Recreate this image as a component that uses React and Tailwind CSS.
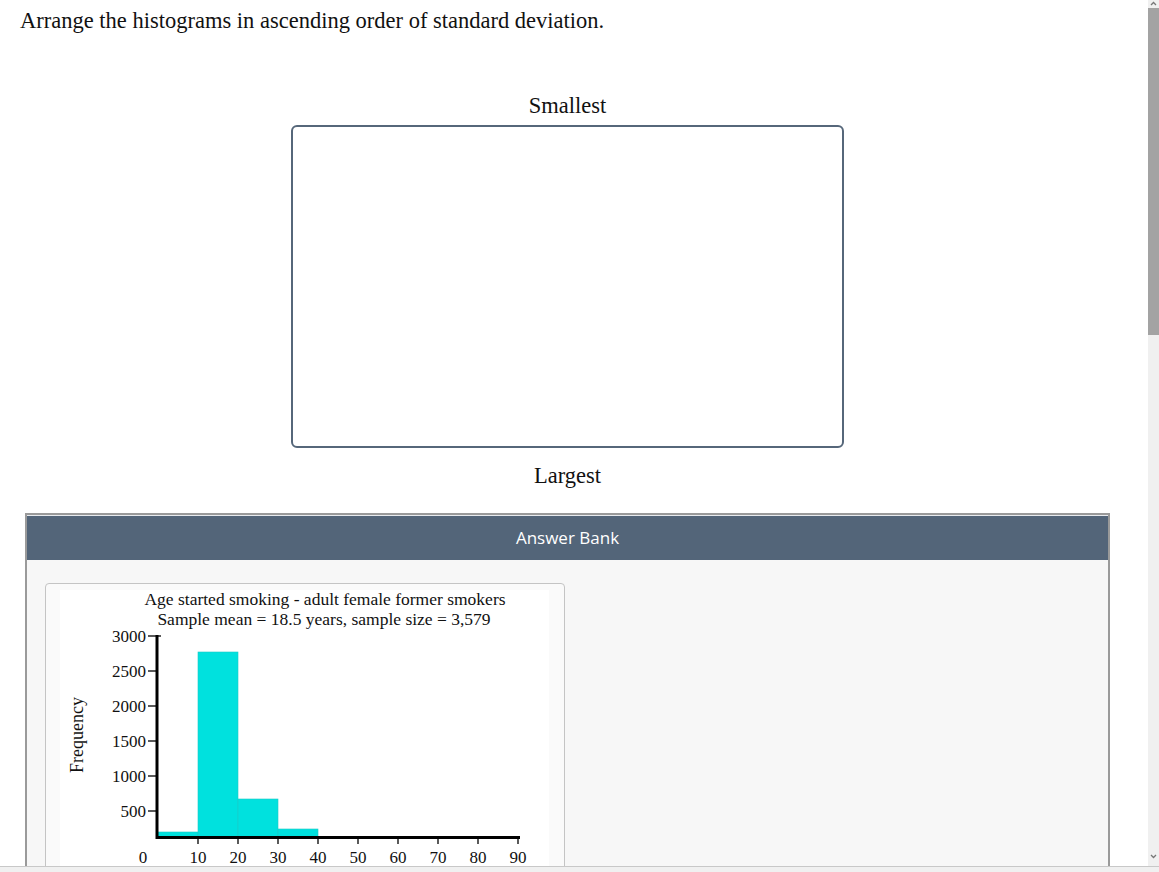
import React from 'react';

const serif = { fontFamily: '"Liberation Serif", "Times New Roman", serif' };

const bars = [
  { x0: 0, x1: 10, top: 242 },
  { x0: 10, x1: 20, top: 62 },
  { x0: 20, x1: 30, top: 209 },
  { x0: 30, x1: 40, top: 239 },
];

const yTicks = [
  { label: '3000', y: 46 },
  { label: '2500', y: 81 },
  { label: '2000', y: 116 },
  { label: '1500', y: 151 },
  { label: '1000', y: 186 },
  { label: '500', y: 221 },
];

const xPos = (v) => 98 + v * 4;

const Histogram = () => (
  <svg width="489" height="290" viewBox="0 0 489 290" className="block" style={serif}>
    <text x="265" y="15" textAnchor="middle" fontSize="17.5" fill="#111">
      Age started smoking - adult female former smokers
    </text>
    <text x="264" y="35" textAnchor="middle" fontSize="17.5" fill="#111">
      Sample mean = 18.5 years, sample size = 3,579
    </text>

    {bars.map((b) => (
      <rect
        key={b.x0}
        x={xPos(b.x0)}
        y={b.top}
        width={xPos(b.x1) - xPos(b.x0)}
        height={247 - b.top}
        fill="#00e1de"
        stroke="#1cc9c6"
        strokeWidth="0.6"
      />
    ))}

    {yTicks.map((t) => (
      <g key={t.label}>
        <line x1="88" x2="97" y1={t.y} y2={t.y} stroke="#000" strokeWidth="1.3" />
        <text x="86" y={t.y + 5.5} textAnchor="end" fontSize="17" fill="#111">
          {t.label}
        </text>
      </g>
    ))}
    <line x1="97" x2="101" y1="46" y2="46" stroke="#000" strokeWidth="1.3" />

    <line x1="97" x2="97" y1="45" y2="249" stroke="#000" strokeWidth="3" />
    <line x1="96" x2="460" y1="247.5" y2="247.5" stroke="#000" strokeWidth="3" />

    {[10, 20, 30, 40, 50, 60, 70, 80, 90].map((v) => (
      <g key={v}>
        <line x1={xPos(v)} x2={xPos(v)} y1="248" y2="254" stroke="#000" strokeWidth="1.3" />
        <text x={xPos(v)} y="273" textAnchor="middle" fontSize="17" fill="#111">
          {v}
        </text>
      </g>
    ))}
    <text x="83" y="273" textAnchor="middle" fontSize="17" fill="#111">0</text>

    <text x="23" y="145" textAnchor="middle" fontSize="18" fill="#111" transform="rotate(-90 23 145)">
      Frequency
    </text>
  </svg>
);

const Scrollbar = () => (
  <div className="w-[11px] shrink-0 bg-[#f0f0f0] flex flex-col items-center">
    <svg width="9" height="8" viewBox="0 0 9 8" className="shrink-0">
      <path d="M2 5 L4.5 2.5 L7 5" fill="none" stroke="#777" strokeWidth="1.3" />
    </svg>
    <div className="w-full h-[327px] bg-[#a3a3a3]" />
    <div className="flex-1" />
    <svg width="9" height="8" viewBox="0 0 9 8" className="shrink-0 mb-[6px]">
      <path d="M2 3 L4.5 5.5 L7 3" fill="none" stroke="#777" strokeWidth="1.3" />
    </svg>
  </div>
);

export default function App() {
  return (
    <div className="h-[872px] w-full flex flex-col overflow-hidden bg-white">
      <div className="flex flex-1 min-h-0">
        <div className="flex-1 min-w-0 overflow-hidden">
          <div className="w-[1135px]">
            <h1 className="pl-[20px] pt-[8px] text-[22.5px] leading-[25px] text-[#111] font-normal" style={serif}>
              Arrange the histograms in ascending order of standard deviation.
            </h1>

            <div className="flex flex-col items-center mt-[61px]">
              <div className="text-[22.5px] leading-[24px] text-[#111]" style={serif}>Smallest</div>
              <div className="mt-[7px] w-[553px] h-[323px] border-2 border-[#56677a] rounded-[6px]" />
              <div className="mt-[16px] text-[22.5px] leading-[24px] text-[#111]" style={serif}>Largest</div>
            </div>

            <div className="mx-[25px] mt-[25px] border-2 border-[#9a9a9a] border-b-0">
              <div className="h-[45px] bg-[#536579] border-t border-[#e8ebef] flex items-center justify-center">
                <span className="text-white text-[17px]" style={{ fontFamily: '"Open Sans", "Noto Sans", sans-serif' }}>
                  Answer Bank
                </span>
              </div>
              <div className="bg-[#f7f7f7] pt-[23px] pl-[18px] h-[400px]">
                <div className="w-[520px] bg-[#fafafa] border border-[#c4c4c4] rounded-[4px] pt-[6px] pl-[14px] pr-[15px]">
                  <div className="bg-white w-[489px]">
                    <Histogram />
                  </div>
                </div>
              </div>
            </div>
          </div>
        </div>
        <Scrollbar />
      </div>
      <div className="h-[6px] shrink-0 bg-[#f0f0f0] border-t border-[#c8c8c8]" />
    </div>
  );
}
